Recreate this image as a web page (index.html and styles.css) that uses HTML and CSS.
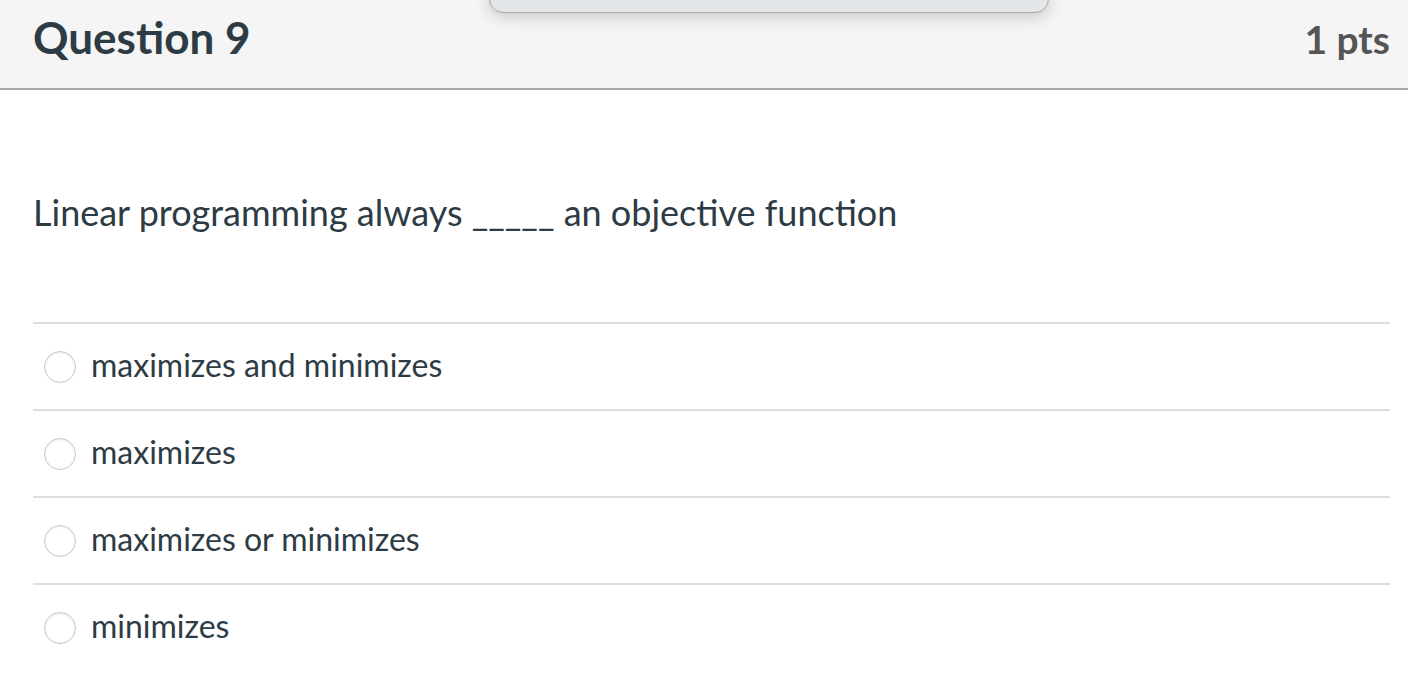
FILE: index.html
```html
<!DOCTYPE html>
<html>
<head>
<meta charset="utf-8">
<link rel="stylesheet" href="styles.css">
</head>
<body>
<div class="question">
  <div class="header">
    <h2 class="title">Question 9</h2>
    <span class="points">1 pts</span>
  </div>
  <div class="popup"></div>
  <div class="body">
    <p class="text">Linear programming always _____ an objective function</p>
    <div class="answers">
      <label class="answer"><span class="radio"></span><span class="label">maximizes and minimizes</span></label>
      <label class="answer"><span class="radio"></span><span class="label">maximizes</span></label>
      <label class="answer"><span class="radio"></span><span class="label">maximizes or minimizes</span></label>
      <label class="answer"><span class="radio"></span><span class="label">minimizes</span></label>
    </div>
  </div>
</div>
</body>
</html>
```
FILE: styles.css
```css
html, body {
  margin: 0;
  padding: 0;
  background: #fff;
  font-family: Lato, "Liberation Sans", sans-serif;
  color: #2d3b45;
}
.question {
  position: relative;
  overflow: hidden;
  height: 694px;
}
.header {
  height: 88px;
  background: #f5f5f5;
  border-bottom: 2px solid #aaaaaa;
  display: flex;
  justify-content: space-between;
  align-items: baseline;
  padding: 0 18px 0 33px;
}
.title {
  margin: 0;
  font-size: 44px;
  font-weight: 700;
  line-height: 74px;
  color: #2d3b45;
}
.points {
  font-size: 39px;
  font-weight: 700;
  color: #555555;
}
.popup {
  position: absolute;
  left: 489px;
  top: -20px;
  width: 558px;
  height: 31px;
  background: #e4e7ea;
  border: 1px solid #a9a9a9;
  border-radius: 14px;
  box-shadow: 0 4px 16px rgba(0, 0, 0, 0.18);
}
.body {
  padding: 0 18px 0 33px;
}
.text {
  margin: 0;
  padding: 95px 0 82px;
  font-size: 36px;
  line-height: 55px;
}
.answers {
  display: flex;
  flex-direction: column;
}
.answer {
  display: flex;
  align-items: center;
  height: 85px;
  border-top: 2px solid #dddddd;
}
.radio {
  width: 30px;
  height: 30px;
  margin-left: 11px;
  margin-right: 15px;
  border: 1px solid #c8c8c8;
  border-radius: 50%;
  background: #fff;
  box-shadow: inset 0 1px 3px rgba(0, 0, 0, 0.08);
  flex: none;
}
.label {
  font-size: 32px;
  color: #2d3b45;
  padding-bottom: 5px;
}
```
